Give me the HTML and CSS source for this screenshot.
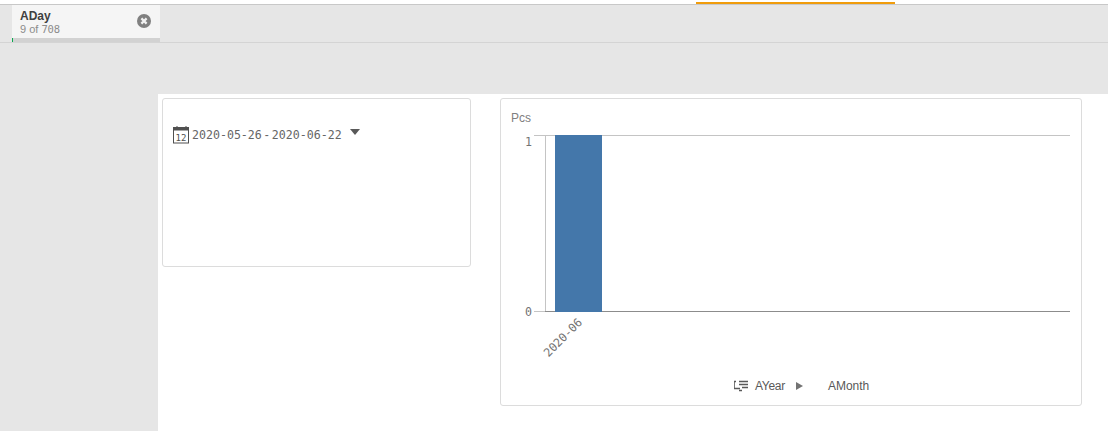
FILE: index.html
```html
<!DOCTYPE html>
<html lang="en">
<head>
<meta charset="utf-8">
<title>ADay</title>
<link rel="stylesheet" href="styles.css">
</head>
<body>
<div class="top-strip"><div class="progress"></div></div>
<div class="selections">
  <div class="tab">
    <div class="tab-text">
      <div class="tab-title">ADay</div>
      <div class="tab-sub">9 of <span class="mono">708</span></div>
    </div>
    <svg class="tab-close" width="14" height="14" viewBox="0 0 14 14"><circle cx="7" cy="7" r="7" fill="#808080"/><path d="M4.4 4.4l5.2 5.2M9.6 4.4l-5.2 5.2" stroke="#f2f2f2" stroke-width="2.2"/></svg>
  </div>
</div>
<div class="band"></div>
<div class="main">
  <div class="side"></div>
  <div class="sheet">
    <section class="card filter">
      <div class="range">
        <svg class="cal" width="17" height="18" viewBox="0 0 17 18"><path d="M3 0.5h2v2H3zM12 0.5h2v2h-2z" fill="#505050"/><rect x="0.5" y="1.5" width="15" height="15.5" fill="none" stroke="#505050"/><rect x="0.5" y="1.5" width="15" height="3" fill="#505050"/><text x="8" y="14.5" class="cal-num">12</text></svg>
        <span class="date">2020-05-26</span><span class="dash">-</span><span class="date">2020-06-22</span>
        <span class="caret"></span>
      </div>
    </section>
    <section class="card chart">
      <div class="chart-title">Pcs</div>
      <svg class="plot" width="570" height="250" viewBox="500 120 570 250">
        <line x1="534" y1="135.5" x2="1070" y2="135.5" stroke="#c4c4c4"/>
        <line x1="545.5" y1="135" x2="545.5" y2="311" stroke="#c4c4c4"/>
        <line x1="534" y1="311.5" x2="545" y2="311.5" stroke="#c4c4c4"/>
        <line x1="545" y1="311.5" x2="1070" y2="311.5" stroke="#8c8c8c"/>
        <rect x="555" y="135" width="47" height="177" fill="#4477aa"/>
        <text x="532" y="146" class="tick" text-anchor="end">1</text>
        <text x="532" y="316" class="tick" text-anchor="end">0</text>
        <text x="0" y="0" class="tick" text-anchor="end" transform="translate(583 323) rotate(-45)">2020-06</text>
      </svg>
      <div class="legend">
        <svg width="14" height="12" viewBox="0 0 14 12"><path d="M0 1.5h2M0 1v7.5h6M5 1.5h9M5 4.5h9M8 7.5h6M5 10.5h3" fill="none" stroke="#595959" stroke-width="1.6"/></svg>
        <span class="dim first">AYear</span>
        <span class="arrow"></span>
        <span class="dim">AMonth</span>
      </div>
    </section>
  </div>
</div>
</body>
</html>
```
FILE: styles.css
```css
* { box-sizing: border-box; }
html, body { margin: 0; height: 100%; }
body {
  width: 1108px;
  height: 431px;
  overflow: hidden;
  background: #fff;
  font-family: "Liberation Sans", Arial, sans-serif;
  display: flex;
  flex-direction: column;
}
.top-strip {
  height: 5px;
  border-bottom: 1px solid #c8c8c8;
  position: relative;
}
.progress {
  position: absolute;
  left: 696px;
  top: 2px;
  width: 199px;
  height: 2px;
  background: #f09c0c;
}
.selections {
  height: 38px;
  background: #e6e6e6;
  border-bottom: 1px solid #d4d4d4;
  padding-left: 12px;
}
.tab {
  width: 148px;
  height: 37px;
  background: #f5f5f5;
  border-bottom: 4px solid #d2d2d2;
  padding: 5px 9px 0 8px;
  display: flex;
  justify-content: space-between;
  position: relative;
}
.tab::after {
  content: "";
  position: absolute;
  left: 0;
  bottom: -4px;
  width: 1px;
  height: 4px;
  background: #0aa84f;
}
.tab-title { font-size: 12px; line-height: 13px; font-weight: bold; color: #404040; }
.tab-sub { font-size: 11px; line-height: 13px; color: #8c8c8c; }
.mono { font-family: "DejaVu Sans Mono", monospace; font-size: 10.5px; letter-spacing: -0.2px; }
.tab-close { margin-top: 4px; }
.band { height: 51px; background: #e6e6e6; }
.main { flex: 1; display: flex; min-height: 0; }
.side { width: 158px; background: #e6e6e6; }
.sheet {
  flex: 1;
  background: #fff;
  padding: 4px 26px 0 4px;
  display: flex;
  align-items: flex-start;
  gap: 29px;
}
.card {
  background: #fff;
  border: 1px solid #dcdcdc;
  border-radius: 3px;
}
.filter { width: 309px; height: 169px; padding: 27px 0 0 10px; }
.range {
  display: flex;
  align-items: center;
  color: #666;
  height: 18px;
}
.cal { flex: none; margin-right: 2px; }
.cal-num { font: 9px "DejaVu Sans Mono", monospace; text-anchor: middle; fill: #505050; }
.date { font: 11.6px "DejaVu Sans Mono", monospace; color: #666; }
.dash { font: 12px "Liberation Sans", sans-serif; padding: 0 3px; }
.caret {
  margin: -6px 0 0 8px;
  border-left: 5px solid transparent;
  border-right: 5px solid transparent;
  border-top: 6px solid #595959;
}
.chart {
  width: 582px;
  height: 308px;
  display: flex;
  flex-direction: column;
  align-items: flex-start;
  padding: 12px 0 0 10px;
}
.chart-title { font-size: 12px; line-height: 14px; color: #808080; height: 9px; }
.plot { display: block; margin-left: -11px; flex: none; }
.tick { font: 11.6px "DejaVu Sans Mono", monospace; fill: #737373; }
.legend {
  display: flex;
  align-items: center;
  margin: 9px 0 0 223px;
  font-size: 12px;
  line-height: 14px;
}
.dim { color: #595959; }
.first { margin-left: 7px; letter-spacing: -0.3px; }
.arrow {
  margin: 0 25px 0 11px;
  border-top: 4.5px solid transparent;
  border-bottom: 4.5px solid transparent;
  border-left: 7px solid #737373;
}
```
